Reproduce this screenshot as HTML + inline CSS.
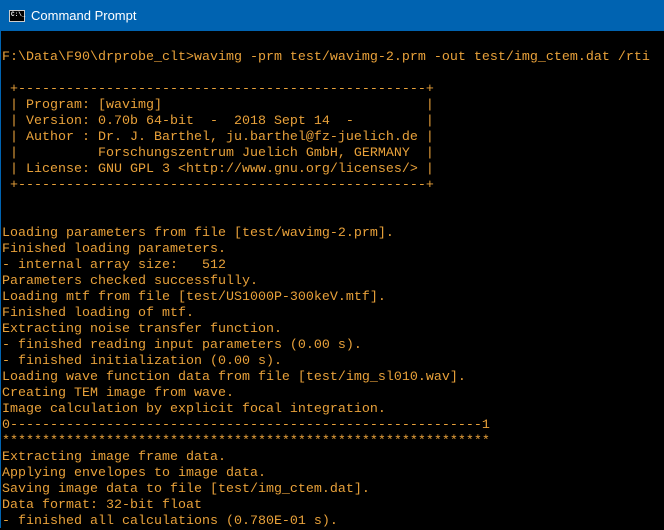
<!DOCTYPE html>
<html><head><meta charset="utf-8"><style>
html,body{margin:0;padding:0;width:664px;height:528px;overflow:hidden;background:#000}
#title{position:absolute;left:0;top:0;width:664px;height:31px;background:#0063b1;}
#title .t{position:absolute;left:31px;top:8px;color:#fff;font:13px "Liberation Sans",sans-serif;}
#icon{position:absolute;left:9px;top:10px;width:14px;height:10px;background:#000;border:1px solid #ccc;}
#icon span{position:absolute;left:1px;top:0px;color:#fff;font:bold 6px "Liberation Mono",monospace;line-height:8px}
#lb{position:absolute;left:0;top:31px;width:1px;height:497px;background:#0063b1}
pre{position:absolute;left:2px;top:34px;margin:0;color:#e8a13a;font-family:"Liberation Mono",monospace;font-size:13.33px;line-height:16px;white-space:pre}
</style></head><body>
<div id="title"><div id="icon"><span>C:\_</span></div><div class="t">Command Prompt</div></div>
<div id="lb"></div>
<pre>

F:\Data\F90\drprobe_clt&gt;wavimg -prm test/wavimg-2.prm -out test/img_ctem.dat /rti

 +---------------------------------------------------+
 | Program: [wavimg]                                 |
 | Version: 0.70b 64-bit  -  2018 Sept 14  -         |
 | Author : Dr. J. Barthel, ju.barthel@fz-juelich.de |
 |          Forschungszentrum Juelich GmbH, GERMANY  |
 | License: GNU GPL 3 &lt;http://www.gnu.org/licenses/&gt; |
 +---------------------------------------------------+


Loading parameters from file [test/wavimg-2.prm].
Finished loading parameters.
- internal array size:   512
Parameters checked successfully.
Loading mtf from file [test/US1000P-300keV.mtf].
Finished loading of mtf.
Extracting noise transfer function.
- finished reading input parameters (0.00 s).
- finished initialization (0.00 s).
Loading wave function data from file [test/img_sl010.wav].
Creating TEM image from wave.
Image calculation by explicit focal integration.
0-----------------------------------------------------------1
*************************************************************
Extracting image frame data.
Applying envelopes to image data.
Saving image data to file [test/img_ctem.dat].
Data format: 32-bit float
- finished all calculations (0.780E-01 s).
</pre>
</body></html>
